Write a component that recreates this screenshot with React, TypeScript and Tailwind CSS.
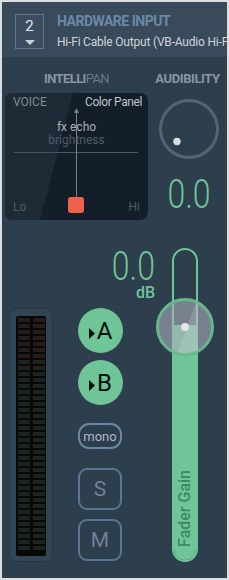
import React from 'react';

function Meter() {
  const rows = Array.from({ length: 39 });
  return (
    <div className="w-[44px] h-[254px] rounded-[8px] bg-[#334452] border border-[#283743] pt-[7px] pl-[6px]">
      <div className="w-[30px] h-[240px] bg-[#070909] flex gap-[3px] pl-[2px] pt-[2px] rounded-[2px]">
        {[0, 1].map((c) => (
          <div key={c} className="w-[12px] flex flex-col gap-[2px]">
            {rows.map((_, i) => (
              <div
                key={i}
                className={i < 7 ? 'h-[4px] bg-[#271b1b]' : i < 9 ? 'h-[4px] bg-[#23211e]' : 'h-[4px] bg-[#1d2320]'}
              />
            ))}
          </div>
        ))}
      </div>
    </div>
  );
}

function BusButton({ label }: { label: string }) {
  return (
    <div className="w-[45px] h-[45px] rounded-full bg-[#6fc597] flex items-center justify-center pl-[1px]">
      <svg width="6" height="11" viewBox="0 0 6 11" className="mt-[6px] mr-[2px]">
        <polygon points="0,0 6,5.5 0,11" fill="#0b0f0d" />
      </svg>
      <span className="text-[24px] leading-none text-[#0b0f0d]">{label}</span>
    </div>
  );
}

function ColorPanel() {
  return (
    <div className="relative w-[143px] h-[127px] rounded-[8px] overflow-hidden bg-[#131e28]">
      <svg className="absolute inset-0" width="143" height="127" viewBox="0 0 143 127">
        <polygon points="0,0 68,0 35,127 0,127" fill="#1e2a35" />
        <line x1="9" y1="59.5" x2="133" y2="59.5" stroke="#4a5763" strokeWidth="1" />
        <line x1="71.5" y1="18" x2="71.5" y2="106" stroke="#76828d" strokeWidth="1" />
        <polygon points="69,20 71.5,15 74,20" fill="#76828d" />
      </svg>
      <span className="absolute left-[8px] top-[3px] text-[12px] leading-none text-[#7f8c97]">VOICE</span>
      <span className="absolute right-[6px] top-[3px] text-[12px] leading-none tracking-[-0.4px] text-[#bcc4cc]">
        Color Panel
      </span>
      <span className="absolute inset-x-0 top-[28px] text-center text-[12px] leading-none text-[#a8b1ba]">fx echo</span>
      <span className="absolute inset-x-0 top-[41px] text-center text-[12px] leading-none text-[#505d69]">brightness</span>
      <span className="absolute left-[8px] top-[108px] text-[12px] leading-none text-[#4d5a66]">Lo</span>
      <span className="absolute right-[8px] top-[108px] text-[12px] leading-none text-[#4d5a66]">Hi</span>
      <div className="absolute left-[63px] top-[104px] w-[16px] h-[16px] rounded-[3px] bg-[#f0614c]" />
    </div>
  );
}

function FaderKnob() {
  return (
    <svg width="58" height="58" viewBox="0 0 58 58">
      <defs>
        <clipPath id="knobClip">
          <circle cx="29" cy="29" r="27" />
        </clipPath>
      </defs>
      <circle cx="29" cy="29" r="27.5" fill="rgba(170,176,186,0.6)" stroke="#68b68c" strokeWidth="3" />
      <polygon points="41,2 42,58 21,56" fill="rgba(255,255,255,0.14)" clipPath="url(#knobClip)" />
      <circle cx="29" cy="29" r="4" fill="#e3e7ea" />
    </svg>
  );
}

export default function App() {
  return (
    <div className="w-[229px] h-[580px] bg-[#dcdfe2] p-[2px] font-['Roboto','Liberation_Sans',sans-serif]">
      <div className="h-full flex flex-col bg-[#2d3e4d] overflow-hidden">
        {/* header */}
        <div className="h-[55px] shrink-0 bg-[#394a5a] flex pt-[12px] pl-[13px]">
          <div className="w-[29px] h-[35px] border border-[#62768a] bg-[#3b4d5e] flex flex-col items-center">
            <span className="mt-[4px] text-[15px] leading-none text-[#e3e7ea]">2</span>
            <svg width="10" height="5" viewBox="0 0 10 5" className="mt-[6px]">
              <polygon points="0,0 10,0 5,5" fill="#c9d0d6" />
            </svg>
          </div>
          <div className="ml-[13px] min-w-0 flex-1 overflow-hidden">
            <div className="text-[14px] leading-none font-bold tracking-[-0.5px] text-[#6b89a5] whitespace-nowrap">
              HARDWARE INPUT
            </div>
            <div className="mt-[8px] text-[12px] leading-none tracking-[-0.2px] text-[#cfd5db] whitespace-nowrap">
              Hi-Fi Cable Output (VB-Audio Hi-Fi Cable)
            </div>
          </div>
        </div>

        {/* intellipan + audibility */}
        <div className="flex pt-[15px]">
          <div className="ml-[3px] w-[143px] flex flex-col items-center">
            <div className="text-[13px] leading-none tracking-[-0.6px] whitespace-nowrap">
              <span className="font-bold text-[#8a96a1]">INTELLI</span>
              <span className="text-[#6c7986]">PAN</span>
            </div>
            <div className="mt-[8px]">
              <ColorPanel />
            </div>
          </div>
          <div className="flex-1 flex flex-col items-center">
            <div className="text-[13px] leading-none font-bold tracking-[-0.4px] text-[#8a96a1]">AUDIBILITY</div>
            <svg width="62" height="62" viewBox="0 0 62 62" className="mt-[13px] ml-[2px]">
              <circle cx="31" cy="31" r="28.5" fill="none" stroke="#536475" strokeWidth="3" />
              <circle cx="19" cy="43.5" r="3.7" fill="#d8dde2" />
            </svg>
            <div className="mt-[15px] ml-[2px] text-[40px] leading-none font-light text-[#6fc497] scale-x-80">0.0</div>
          </div>
        </div>

        {/* meter, buses, fader */}
        <div className="flex">
          <div className="w-[154px] flex flex-col">
            <div className="flex flex-col items-end pr-[1px]">
              <div className="mt-[29px] h-[36px] text-[40px] leading-[36px] font-light text-[#6fc497] scale-x-80 origin-right">
                0.0
              </div>
              <div className="text-[16px] leading-none font-medium text-[#6fc497]">dB</div>
            </div>
            <div className="flex pl-[7px] mt-[7px]">
              <Meter />
              <div className="ml-[24px] w-[46px] flex flex-col items-center">
                <BusButton label="A" />
                <div className="mt-[7px]">
                  <BusButton label="B" />
                </div>
                <div className="mt-[18px] w-[44px] h-[26px] rounded-[11px] border-2 border-[#6a87a2] flex items-center justify-center text-[13px] leading-none text-[#a9bac9]">
                  mono
                </div>
                <div className="mt-[19px] w-[44px] h-[42px] rounded-[9px] border-2 border-[#5b7690] flex items-center justify-center text-[21px] leading-none text-[#6c8298]">
                  S
                </div>
                <div className="mt-[9px] w-[44px] h-[42px] rounded-[9px] border-2 border-[#5b7690] flex items-center justify-center text-[21px] leading-none text-[#6c8298]">
                  M
                </div>
              </div>
            </div>
          </div>

          <div className="relative w-[58px] mt-[28px] flex justify-center">
            <div className="relative w-[26px] h-[314px] rounded-full border-2 border-[#6fc597] overflow-hidden">
              <div className="absolute inset-x-0 bottom-0 h-[235px] bg-[#6fc597] flex flex-col justify-end items-center pb-[13px]">
                <span className="[writing-mode:vertical-rl] rotate-180 text-[16px] leading-none font-medium text-[#3e8862] whitespace-nowrap">
                  Fader Gain
                </span>
              </div>
            </div>
            <div className="absolute left-0 top-[50px]">
              <FaderKnob />
            </div>
          </div>
        </div>
      </div>
    </div>
  );
}
